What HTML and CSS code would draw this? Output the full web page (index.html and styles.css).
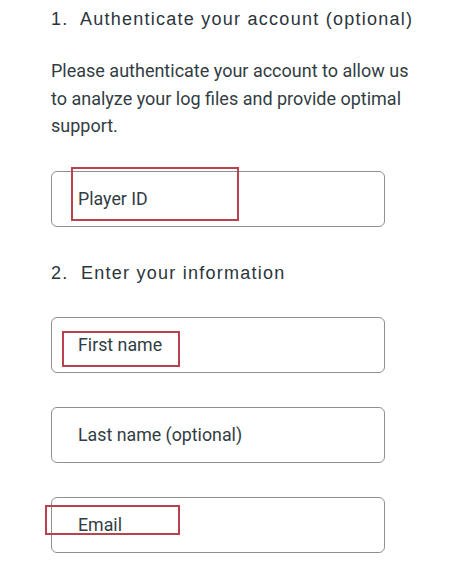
FILE: index.html
```html
<!DOCTYPE html>
<html lang="en">
<head>
    <meta charset="UTF-8">
    <meta name="viewport" content="width=device-width, initial-scale=1.0">
    <title>Support Request</title>
    <link rel="stylesheet" href="styles.css">
</head>
<body>
    <div class="form-container">
        <!-- Step 1 -->
        <h2 class="step-title">1.&nbsp; Authenticate your account (optional)</h2>
        <p class="step-text">Please authenticate your account to allow us to analyze your log files and provide optimal support.</p>

        <div class="field field-player">
            <span class="field-label">Player ID</span>
            <div class="mark mark-player"></div>
        </div>

        <!-- Step 2 -->
        <h2 class="step-title step-two">2.&nbsp; Enter your information</h2>

        <div class="field field-first">
            <span class="field-label">First name</span>
            <div class="mark mark-first"></div>
        </div>
        <div class="field">
            <span class="field-label">Last name (optional)</span>
        </div>
        <div class="field">
            <span class="field-label">Email</span>
            <div class="mark mark-email"></div>
        </div>
    </div>
</body>
</html>
```
FILE: styles.css
```css
body {
    margin: 0;
    padding: 0;
    background-color: #fff;
    color: #323d43;
    font-family: Roboto, "Liberation Sans", sans-serif;
}
.form-container {
    display: flex;
    flex-direction: column;
    width: 370px;
    padding-left: 51px;
}
/* Step headings */
.step-title {
    margin: 7px 0 0;
    font-family: "Liberation Sans", Arial, sans-serif;
    font-size: 18px;
    font-weight: normal;
    line-height: 24px;
    letter-spacing: 1.25px;
    white-space: nowrap;
    color: #2b353b;
}
.step-two {
    margin-top: 34px;
}
.step-text {
    max-width: 362px;
    margin: 26px 0 0;
    font-size: 18px;
    line-height: 27.5px;
}
/* Input boxes */
.field {
    position: relative;
    display: flex;
    align-items: center;
    box-sizing: border-box;
    width: 334px;
    height: 56px;
    margin-top: 34px;
    padding-left: 26px;
    border: 1.5px solid #8f8f8f;
    border-radius: 6px;
}
.field-player {
    margin-top: 31px;
}
.field-first {
    margin-top: 32px;
}
.field-label {
    font-size: 17.8px;
}
/* Red annotation boxes drawn over the fields */
.mark {
    position: absolute;
    border: 2px solid #b8434d;
    box-sizing: border-box;
}
.mark-player {
    left: 19px;
    top: -5px;
    width: 168px;
    height: 54px;
}
.mark-first {
    left: 10px;
    top: 13px;
    width: 118px;
    height: 36px;
}
.mark-email {
    left: -7px;
    top: 7px;
    width: 135px;
    height: 30px;
}
```
